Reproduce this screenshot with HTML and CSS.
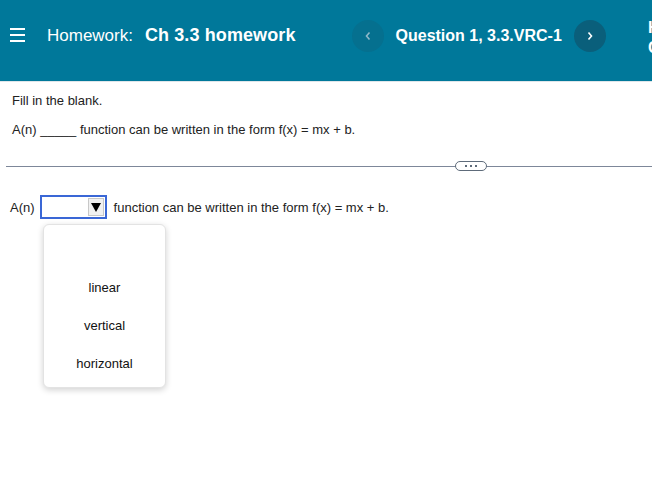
FILE: index.html
```html
<!DOCTYPE html>
<html>
<head>
<meta charset="utf-8">
<link rel="stylesheet" href="styles.css">
</head>
<body>
<header class="topbar">
  <div class="menu-icon"><span></span><span></span><span></span></div>
  <div class="title">Homework:<b>Ch 3.3 homework</b></div>
  <div class="nav">
    <div class="circ prev"><svg width="8" height="10" viewBox="0 0 8 10"><path d="M5.5 1.5 L2.5 5 L5.5 8.5" fill="none" stroke="#8fb8c8" stroke-width="1.6"/></svg></div>
    <div class="qtitle">Question 1, 3.3.VRC-1</div>
    <div class="circ next"><svg width="8" height="10" viewBox="0 0 8 10"><path d="M2.5 1.5 L5.5 5 L2.5 8.5" fill="none" stroke="#ffffff" stroke-width="1.6"/></svg></div>
  </div>
  <div class="clip">H<br>C</div>
</header>
<main class="content">
  <p class="line1">Fill in the blank.</p>
  <p class="line2">A(n) _____ function can be written in the form f(x) = mx + b.</p>
  <div class="divider"><div class="pill"><i></i><i></i><i></i></div></div>
  <div class="answer">
    <span>A(n)</span>
    <div class="select">
      <div class="field"></div>
      <div class="arrow"><svg width="10" height="9" viewBox="0 0 10 9"><path d="M0 0 H10 L5 9 Z" fill="#000"/></svg></div>
    </div>
    <span class="rest">function can be written in the form f(x) = mx + b.</span>
  </div>
  <div class="popup">
    <div class="opt">linear</div>
    <div class="opt">vertical</div>
    <div class="opt">horizontal</div>
  </div>
</main>
</body>
</html>
```
FILE: styles.css
```css
* { box-sizing: border-box; }
html, body { margin: 0; padding: 0; background: #fff; }
body { font-family: Arial, "Liberation Sans", sans-serif; width: 652px; height: 494px; overflow: hidden; }
.topbar {
  height: 82px;
  background: #00789a;
  border-bottom: 1px solid #dfe6ea;
  display: flex;
  align-items: flex-start;
  padding-top: 25px;
  color: #fff;
  position: relative;
}
.menu-icon { width: 15px; margin-left: 10px; margin-top: 3px; display: flex; flex-direction: column; gap: 4px; }
.menu-icon span { display: block; height: 2px; background: #fff; }
.title { margin-left: 22px; font-size: 17px; line-height: 21px; white-space: nowrap; }
.title b { margin-left: 12px; font-size: 18px; letter-spacing: 0.1px; }
.nav { display: flex; align-items: center; margin-left: 56px; margin-top: -5px; }
.circ { width: 32px; height: 32px; border-radius: 50%; display: flex; align-items: center; justify-content: center; flex: none; }
.prev { background: #05708f; }
.next { background: #0a5f7b; }
.qtitle { font-size: 16px; font-weight: bold; margin: 0 12px 0 12px; white-space: nowrap; }
.clip { position: absolute; left: 648px; top: 18px; font-weight: bold; font-size: 16px; line-height: 20px; }
.content { padding: 11px 0 0 12px; font-size: 13px; color: #222; position: relative; }
.line1 { margin: 0; line-height: 15px; }
.line2 { margin: 14px 0 0 0; line-height: 15px; }
.divider { margin: 29px 0 0 -6px; height: 1px; background: #7d8799; position: relative; }
.pill {
  position: absolute; left: 449px; top: -5px; width: 32px; height: 10px;
  border: 1px solid #5e6b7a; border-radius: 5px; background: #fff;
  display: flex; align-items: center; justify-content: center; gap: 3px;
}
.pill i { width: 2px; height: 2px; background: #5e6b7a; display: block; }
.answer { display: flex; align-items: center; margin: 28px 0 0 -2px; gap: 5px; }
.answer .rest { margin-left: 2px; }
.select {
  width: 67px; height: 24px; border: 2px solid #3a67d6; display: flex; background: #fff;
}
.field { flex: 1; }
.arrow {
  width: 16px; margin: 1px; background: #f1f1f1; border: 1px solid #c8c8c8;
  display: flex; align-items: center; justify-content: center;
}
.popup {
  position: absolute; left: 43px; top: 142px; width: 123px; height: 164px;
  background: #fff; border-radius: 6px; border: 1px solid #e3e3e3;
  box-shadow: 0 2px 6px rgba(0,0,0,0.18);
  display: flex; flex-direction: column; align-items: center; padding-top: 55px;
}
.opt { height: 38px; flex: none; line-height: 15px; color: #111; }
```
